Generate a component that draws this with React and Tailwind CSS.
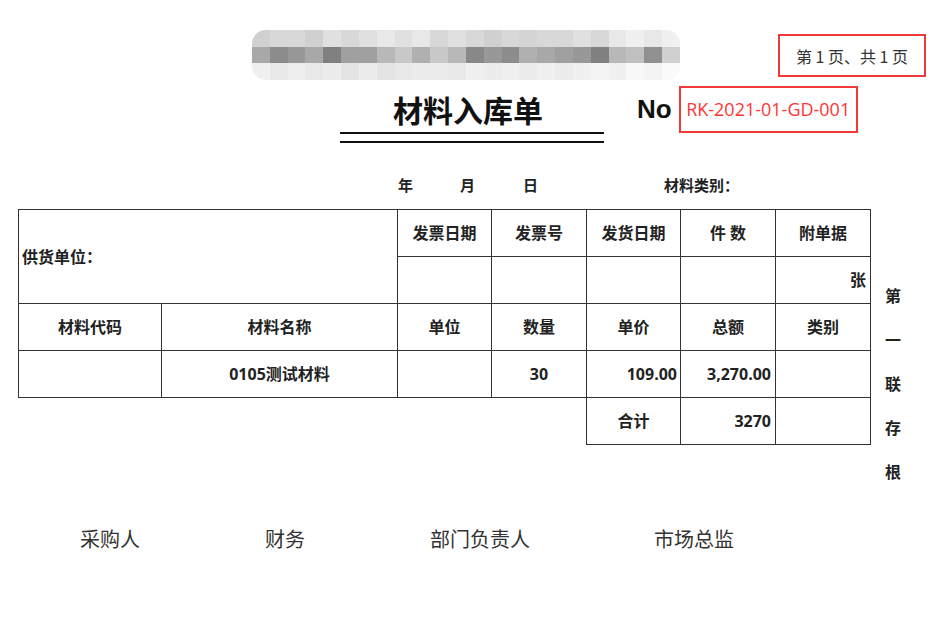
import React from "react";

const mosaic = [
  ["d0", "d8", "d8", "d0", "e0", "d8", "e0", "e8", "e0", "e8", "d8", "e0", "d8", "d0", "d8", "d4", "d8", "d8", "e0", "d8", "e8", "f0", "e8", "f0"],
  ["a8", "8c", "98", "a8", "80", "a0", "a0", "b8", "c8", "b0", "c8", "b8", "88", "98", "8c", "b0", "a8", "a0", "98", "80", "b8", "c0", "90", "d0"],
  ["f0", "e8", "ee", "e8", "ec", "e4", "ec", "e4", "e8", "ec", "ec", "e8", "f0", "ec", "f0", "ec", "f0", "ec", "f0", "f4", "f0", "f8", "f4", "fa"],
];

const cell = "border border-[#333] text-center align-middle p-0 h-[47px]";
const head = cell + " font-bold text-[16px] text-[#222]";

export default function App() {
  return (
    <div className="w-[952px] h-[625px] bg-white text-[#222] font-['Open_Sans','Noto_Sans_CJK_SC',sans-serif]">
      {/* top: blurred company name + page counter */}
      <div className="flex pt-[30px]">
        <div className="ml-[252px] w-[428px] h-[50px] flex flex-col rounded-[14px] overflow-hidden blur-[0.6px]">
          {mosaic.map((row, i) => (
            <div key={i} className="flex flex-1">
              {row.map((c, j) => (
                <div key={j} className="flex-1" style={{ background: `#${c}${c}${c}` }} />
              ))}
            </div>
          ))}
        </div>
        <div className="ml-[98px] mt-[4px] w-[148px] h-[43px] border-2 border-[#f03a3a] flex items-center justify-center text-[16px] text-[#333] font-['Noto_Sans_CJK_SC',sans-serif]">
          第 1 页、共 1 页
        </div>
      </div>

      {/* title */}
      <div className="flex mt-[6px]">
        <div className="ml-[340px] w-[264px] flex flex-col">
          <div className="h-[46px] flex items-center justify-center text-[30px] font-bold font-['Noto_Sans_CJK_SC',sans-serif] text-[#111] pr-[8px]">
            材料入库单
          </div>
          <div className="h-[2px] bg-[#111]" />
          <div className="h-[2px] bg-[#111] mt-[7px]" />
        </div>
        <div className="ml-[33px] h-[47px] flex items-center text-[26px] font-bold text-[#111] font-['Liberation_Sans',sans-serif]">
          No
        </div>
        <div className="ml-[7px] w-[179px] h-[47px] border-2 border-[#f03a3a] flex items-center justify-center text-[18px] text-[#ff3535] font-['Open_Sans',sans-serif]">
          RK-2021-01-GD-001
        </div>
      </div>

      {/* date row */}
      <div className="flex mt-[31px] h-[22px] items-center text-[15px] font-bold font-['Noto_Sans_CJK_SC',sans-serif]">
        <span className="ml-[398px]">年</span>
        <span className="ml-[47px]">月</span>
        <span className="ml-[48px]">日</span>
        <span className="ml-[126px]">材料类别：</span>
      </div>

      {/* table + side label */}
      <div className="flex items-start mt-[13px] ml-[18px]">
        <table className="border-collapse table-fixed w-[852px] font-['Open_Sans','Noto_Sans_CJK_SC',sans-serif]">
          <colgroup>
            <col className="w-[143px]" />
            <col className="w-[236px]" />
            <col className="w-[94px]" />
            <col className="w-[95px]" />
            <col className="w-[94px]" />
            <col className="w-[95px]" />
            <col className="w-[95px]" />
          </colgroup>
          <tbody>
            <tr>
              <td colSpan={2} rowSpan={2} className={head + " text-left pl-[3px]"}>
                供货单位：
              </td>
              <td className={head}>发票日期</td>
              <td className={head}>发票号</td>
              <td className={head}>发货日期</td>
              <td className={head}>件 数</td>
              <td className={head}>附单据</td>
            </tr>
            <tr>
              <td className={cell}></td>
              <td className={cell}></td>
              <td className={cell}></td>
              <td className={cell}></td>
              <td className={head + " text-right pr-[4px]"}>张</td>
            </tr>
            <tr>
              <td className={head}>材料代码</td>
              <td className={head}>材料名称</td>
              <td className={head}>单位</td>
              <td className={head}>数量</td>
              <td className={head}>单价</td>
              <td className={head}>总额</td>
              <td className={head}>类别</td>
            </tr>
            <tr>
              <td className={cell}></td>
              <td className={head}>0105测试材料</td>
              <td className={cell}></td>
              <td className={head}>30</td>
              <td className={head + " text-right pr-[3px]"}>109.00</td>
              <td className={head + " text-right pr-[4px]"}>3,270.00</td>
              <td className={cell}></td>
            </tr>
            <tr>
              <td colSpan={4} className="border-0 p-0"></td>
              <td className={head}>合计</td>
              <td className={head + " text-right pr-[4px]"}>3270</td>
              <td className={cell}></td>
            </tr>
          </tbody>
        </table>
        <div className="ml-[14px] mt-[76px] flex flex-col gap-[24px] text-[16px] font-bold font-['Noto_Sans_CJK_SC',sans-serif] leading-[20px]">
          <span>第</span>
          <span>一</span>
          <span>联</span>
          <span>存</span>
          <span>根</span>
        </div>
      </div>

      {/* signatures */}
      <div className="flex mt-[43px] text-[20px] text-[#333] font-['Noto_Sans_CJK_SC',sans-serif]">
        <span className="ml-[80px]">采购人</span>
        <span className="ml-[125px]">财务</span>
        <span className="ml-[125px]">部门负责人</span>
        <span className="ml-[124px]">市场总监</span>
      </div>
    </div>
  );
}
